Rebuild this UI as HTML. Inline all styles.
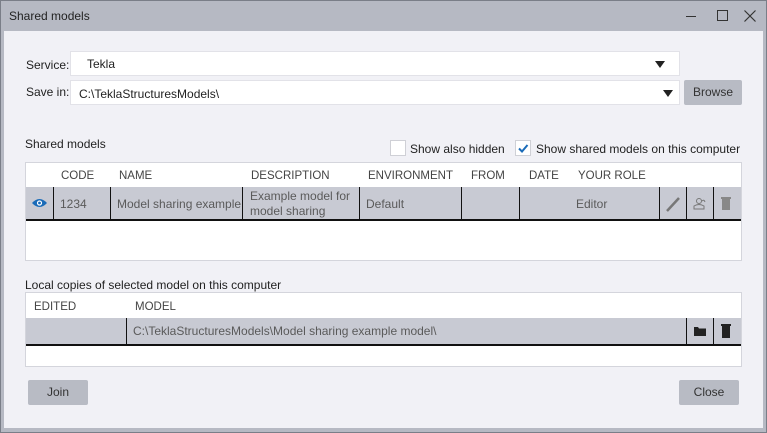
<!DOCTYPE html>
<html><head><style>
*{margin:0;padding:0;box-sizing:border-box}
body{width:767px;height:433px;overflow:hidden;background:#b6b9c3;font-family:"Liberation Sans",sans-serif;font-size:12px;color:#222;position:relative}
.abs{position:absolute}
#frame{left:0;top:0;width:767px;height:433px;border:1px solid #7a7e88}
#client{left:4px;top:31px;width:759px;height:397px;background:#f1f1f6}
.t{position:absolute;white-space:nowrap;line-height:14px}
.combo{position:absolute;background:#fff;border:1px solid #e2e2e8}
.tri{position:absolute;width:0;height:0;border-left:5px solid transparent;border-right:5px solid transparent;border-top:7px solid #222}
.btn{position:absolute;background:#b8bbc4;border-radius:2px;text-align:center;line-height:24px;color:#333}
.tbl{position:absolute;background:#fff;border:1px solid #d4d5dc}
.hdr{color:#444;font-size:11.5px}
.sel{position:absolute;background:#c8cad3;border-bottom:2px solid #111}
.vl{position:absolute;top:0;width:1px;background:#111}
.g{color:#5a5a5a}
</style></head><body>
<div id="frame" class="abs"></div>
<div class="t" style="left:9px;top:9px;color:#222">Shared models</div>
<div class="abs" style="left:686px;top:16px;width:10px;height:1px;background:#333"></div>
<div class="abs" style="left:717px;top:10px;width:11px;height:11px;border:1px solid #333"></div>
<svg class="abs" style="left:744px;top:10px" width="12" height="12"><path d="M0.5 0.5 L11.5 11.5 M11.5 0.5 L0.5 11.5" stroke="#333" stroke-width="1.2"/></svg>
<div id="client" class="abs"></div>

<div class="t" style="left:26px;top:58px">Service:</div>
<div class="combo" style="left:70px;top:51px;width:610px;height:25px"><div class="t" style="left:16px;top:5px">Tekla</div><div class="tri" style="left:584px;top:9px"></div></div>
<div class="t" style="left:26px;top:85px">Save in:</div>
<div class="combo" style="left:70px;top:80px;width:610px;height:25px"><div class="t" style="left:8px;top:6px">C:\TeklaStructuresModels\</div><div class="tri" style="left:592px;top:9px"></div></div>
<div class="btn" style="left:684px;top:80px;width:58px;height:25px">Browse</div>

<div class="t" style="left:25px;top:137px">Shared models</div>
<div class="abs" style="left:390px;top:140px;width:16px;height:16px;background:#fff;border:1px solid #cfd0d6"></div>
<div class="t" style="left:410px;top:142px">Show also hidden</div>
<div class="abs" style="left:515px;top:140px;width:16px;height:16px;background:#fff;border:1px solid #cfd0d6"></div>
<svg class="abs" style="left:517px;top:142px" width="12" height="12"><path d="M2 6.5 L5 9.5 L10.5 3" stroke="#1a6bb8" stroke-width="2" fill="none"/></svg>
<div class="t" style="left:536px;top:142px">Show shared models on this computer</div>

<div class="tbl" style="left:25px;top:162px;width:717px;height:99px">
 <div class="t hdr" style="left:35px;top:6px">CODE</div>
 <div class="t hdr" style="left:93px;top:6px">NAME</div>
 <div class="t hdr" style="left:225px;top:6px">DESCRIPTION</div>
 <div class="t hdr" style="left:342px;top:6px">ENVIRONMENT</div>
 <div class="t hdr" style="left:445px;top:6px">FROM</div>
 <div class="t hdr" style="left:503px;top:6px">DATE</div>
 <div class="t hdr" style="left:552px;top:6px">YOUR ROLE</div>
 <div class="sel" style="left:0;top:24px;width:715px;height:34px">
  <div class="vl" style="left:27px;height:32px"></div>
  <div class="vl" style="left:84px;height:32px"></div>
  <div class="vl" style="left:216px;height:32px"></div>
  <div class="vl" style="left:333px;height:32px"></div>
  <div class="vl" style="left:435px;height:32px"></div>
  <div class="vl" style="left:493px;height:32px"></div>
  <div class="vl" style="left:633px;height:32px"></div>
  <div class="vl" style="left:660px;height:32px"></div>
  <div class="vl" style="left:687px;height:32px"></div>
  <svg class="abs" style="left:5px;top:10px" width="17" height="12"><path d="M1 6 Q8.5 -2 16 6 Q8.5 14 1 6Z" fill="#1a6bb8"/><circle cx="8.5" cy="6" r="2.6" fill="#fff"/><circle cx="8.5" cy="6" r="1.4" fill="#1a6bb8"/></svg>
  <div class="t g" style="left:34px;top:10px">1234</div>
  <div class="t g" style="left:91px;top:10px">Model sharing example</div>
  <div class="t g" style="left:224px;top:2px;line-height:15px">Example model for<br>model sharing</div>
  <div class="t g" style="left:340px;top:10px">Default</div>
  <div class="t g" style="left:550px;top:10px">Editor</div>
  <svg class="abs" style="left:638px;top:8px" width="18" height="18"><path d="M3 16 L15 3" stroke="#777" stroke-width="2.5"/></svg>
  <svg class="abs" style="left:666px;top:10px" width="16" height="14"><circle cx="7" cy="4" r="2.5" stroke="#777" fill="none"/><path d="M2 12 L2 9 Q7 6 12 9 L12 12Z" stroke="#777" fill="none"/><path d="M10 4 Q12 2 13 5" stroke="#777" fill="none"/></svg>
  <svg class="abs" style="left:694px;top:9px" width="12" height="15"><rect x="2" y="3" width="8" height="11" fill="#888"/><rect x="1" y="1" width="10" height="2" fill="#888"/></svg>
 </div>
</div>

<div class="t" style="left:25px;top:278px">Local copies of selected model on this computer</div>
<div class="tbl" style="left:25px;top:292px;width:717px;height:75px">
 <div class="t hdr" style="left:8px;top:7px">EDITED</div>
 <div class="t hdr" style="left:109px;top:7px">MODEL</div>
 <div class="sel" style="left:0;top:25px;width:715px;height:28px">
  <div class="vl" style="left:100px;height:26px"></div>
  <div class="vl" style="left:660px;height:26px"></div>
  <div class="vl" style="left:687px;height:26px"></div>
  <div class="t g" style="left:107px;top:6px">C:\TeklaStructuresModels\Model sharing example model\</div>
  <svg class="abs" style="left:667px;top:7px" width="14" height="12"><path d="M1 2 H5 L6 3.5 H13 V11 H1Z" fill="#222"/></svg>
  <svg class="abs" style="left:694px;top:5px" width="12" height="16"><rect x="2" y="3" width="8" height="12" fill="#222"/><rect x="1" y="1" width="10" height="2" fill="#222"/></svg>
 </div>
</div>

<div class="btn" style="left:28px;top:380px;width:60px;height:25px">Join</div>
<div class="btn" style="left:679px;top:380px;width:60px;height:25px">Close</div>
</body></html>
